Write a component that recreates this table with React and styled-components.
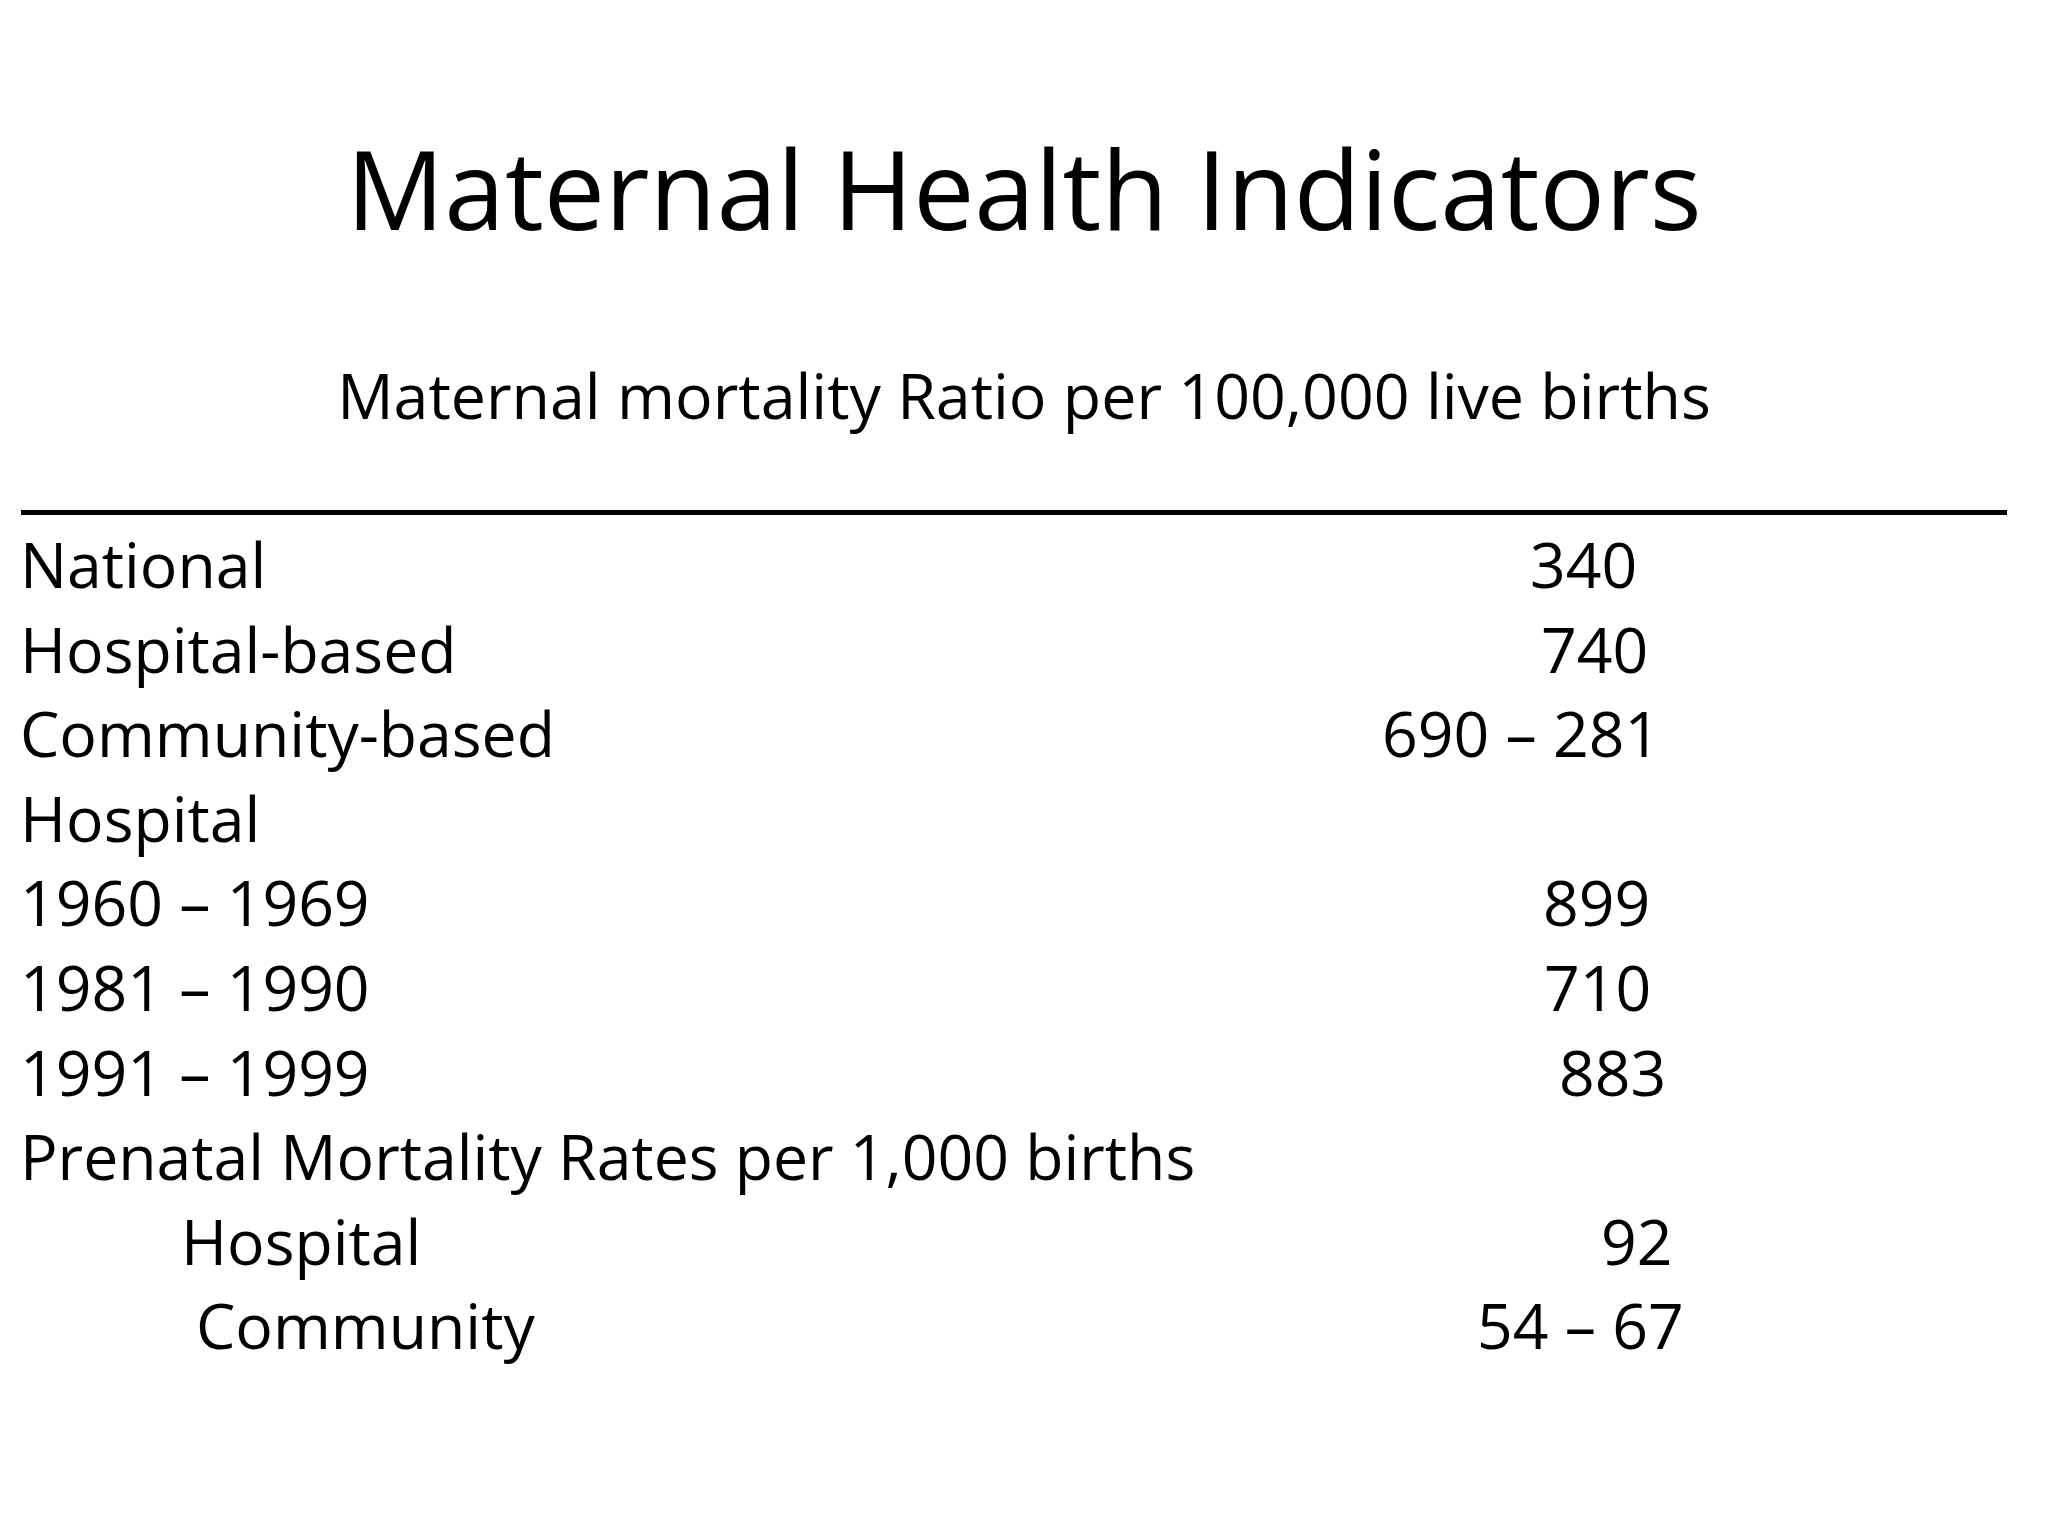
import React from "react";
import styled, { createGlobalStyle } from "styled-components";

const GlobalStyle = createGlobalStyle`
  html, body {
    margin: 0;
    padding: 0;
    background: #ffffff;
  }
`;

const rows = [
  { label: "National", value: "340", at: 1530 },
  { label: "Hospital-based", value: "740", at: 1541 },
  { label: "Community-based", value: "690 – 281", at: 1382 },
  { label: "Hospital" },
  { label: "1960 – 1969", value: "899", at: 1543 },
  { label: "1981 – 1990", value: "710", at: 1544 },
  { label: "1991 – 1999", value: "883", at: 1559 },
  { label: "Prenatal Mortality Rates per 1,000 births" },
  { label: "Hospital", value: "92", at: 1601, indent: 161 },
  { label: "Community", value: "54 – 67", at: 1477, indent: 176 },
];

const App = () => {
  return (
    <>
      <GlobalStyle />
      <Slide>
        <Title>Maternal Health Indicators</Title>
        <Subtitle>Maternal mortality Ratio per 100,000 live births</Subtitle>
        <Rule />
        <Table>
          {rows.map((r, i) => (
            <Row key={i}>
              <Label $at={r.at} $indent={r.indent}>{r.label}</Label>
              {r.value && <Value>{r.value}</Value>}
            </Row>
          ))}
        </Table>
      </Slide>
    </>
  );
};

const Slide = styled.div`
  width: 2048px;
  height: 1536px;
  box-sizing: border-box;
  padding-top: 124px;
  background: #ffffff;
  color: #000000;
  font-family: "Open Sans", "Noto Sans", sans-serif;
  overflow: hidden;
`;

const Title = styled.h1`
  margin: 0;
  text-align: center;
  font-size: 109px;
  font-weight: 400;
  line-height: 128px;
`;

const Subtitle = styled.p`
  margin: 100px 0 0;
  text-align: center;
  font-size: 62.7px;
  line-height: 85px;
`;

const Rule = styled.div`
  margin: 73px 0 0 21px;
  width: 1986px;
  height: 5px;
  background: #000000;
`;

const Table = styled.div`
  margin-top: 7px;
  padding-left: 20px;
  display: flex;
  flex-direction: column;
`;

const Row = styled.div`
  display: flex;
  align-items: baseline;
  font-size: 62.5px;
  line-height: 84.6px;
  white-space: nowrap;
`;

const Label = styled.span`
  flex: 0 0 ${(p) => (p.$at ? `${p.$at - 20}px` : "auto")};
  box-sizing: border-box;
  padding-left: ${(p) => p.$indent || 0}px;
`;

const Value = styled.span`
  flex: none;
`;

export default App;
